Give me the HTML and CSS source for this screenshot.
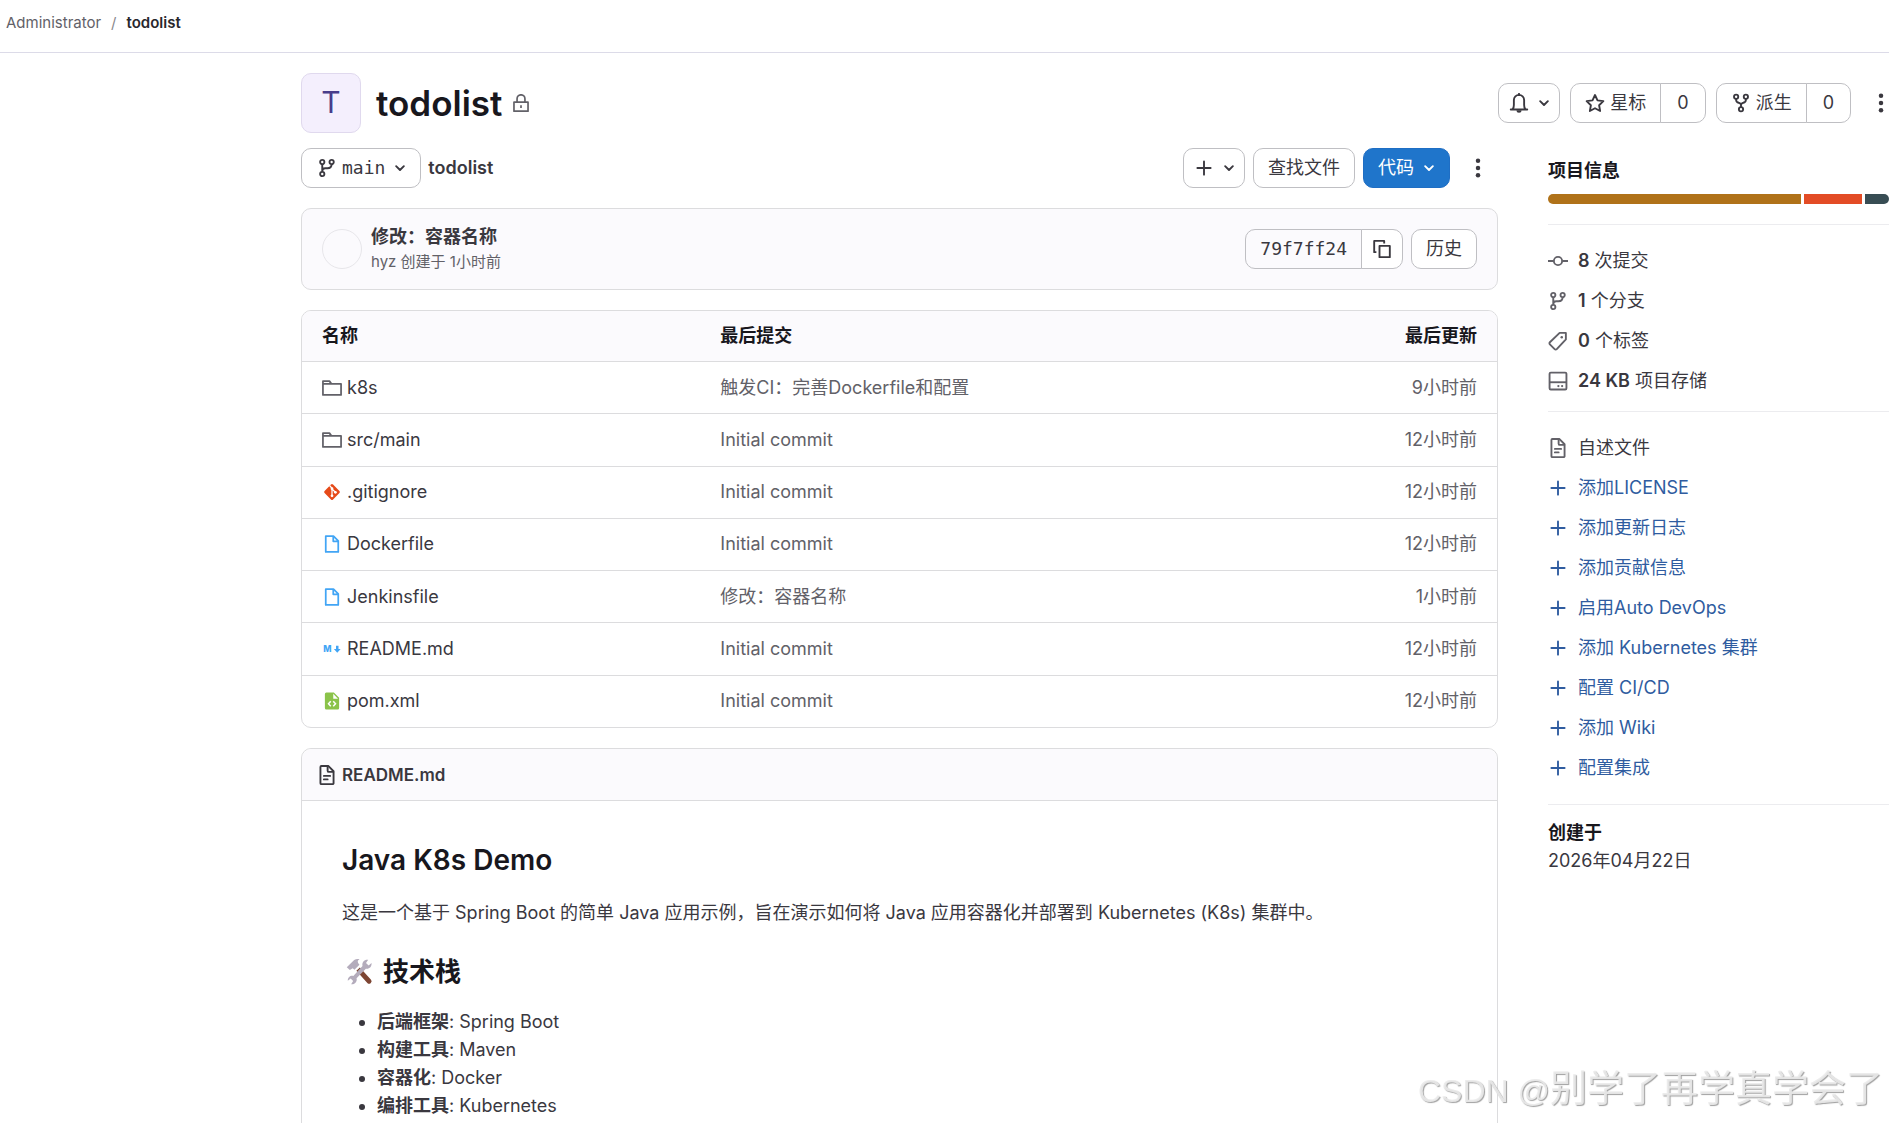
FILE: index.html
```html
<!DOCTYPE html>
<html lang="zh-CN">
<head>
    <meta charset="UTF-8">
    <meta name="viewport" content="width=device-width, initial-scale=1.0">
    <title>Administrator / todolist</title>
    <link rel="stylesheet" href="styles.css">
</head>
<body>

<!-- Shared icons -->
<svg class="sprite" aria-hidden="true">
    <symbol id="chevron" viewBox="0 0 16 16"><path d="M4.9 6.5 8 9.6l3.1-3.1" fill="none" stroke="currentColor" stroke-width="1.5" stroke-linecap="round" stroke-linejoin="round"/></symbol>
    <symbol id="plus" viewBox="0 0 16 16"><path d="M8 2.7v10.6M2.7 8h10.6" fill="none" stroke="currentColor" stroke-width="1.5" stroke-linecap="round"/></symbol>
    <symbol id="kebab" viewBox="0 0 16 16"><g fill="currentColor"><circle cx="8" cy="2.2" r="1.8"/><circle cx="8" cy="8" r="1.8"/><circle cx="8" cy="13.8" r="1.8"/></g></symbol>
    <symbol id="branch" viewBox="0 0 16 16"><g fill="none" stroke="currentColor" stroke-width="1.5"><circle cx="4.2" cy="3.2" r="1.7"/><circle cx="11.7" cy="3.2" r="1.7"/><circle cx="4.2" cy="12.8" r="1.7"/><path d="M4.2 5v6M11.7 5c0 2.4-1.2 3.2-3.4 3.2H6.6C5 8.2 4.2 9 4.2 10.5"/></g></symbol>
    <symbol id="fork" viewBox="0 0 16 16"><g fill="none" stroke="currentColor" stroke-width="1.5"><circle cx="4.1" cy="3" r="1.7"/><circle cx="11.9" cy="3" r="1.7"/><circle cx="8" cy="13" r="1.7"/><path d="M4.1 4.7v.8C4.1 7 5.2 7.5 6.2 7.8 7.3 8.1 8 8.5 8 9.5v1.7M11.9 4.7v.8c0 1.5-1.1 2-2.1 2.3C8.7 8.1 8 8.5 8 9.5"/></g></symbol>
    <symbol id="doc" viewBox="0 0 16 16"><g fill="none" stroke="currentColor" stroke-width="1.5" stroke-linejoin="round"><path d="M2.75 1.5a.75.75 0 0 1 .75-.75H9L13.25 5v9.5a.75.75 0 0 1-.75.75h-9a.75.75 0 0 1-.75-.75z"/><path d="M8.5 1v3.5a1 1 0 0 0 1 1H13M5.5 8.7h5M5.5 11.5h3" stroke-linecap="round"/></g></symbol>
    <symbol id="folder" viewBox="0 0 16 16"><path d="M.75 13.5v-11h5.2l1.6 2.2h7.7v8.8zM.75 4.7h7" fill="none" stroke="currentColor" stroke-width="1.4" stroke-linejoin="round"/></symbol>
    <symbol id="file" viewBox="0 0 16 16"><path d="M3 1.7h6.2L13 5.5v8.800H3zM9 1.9v3.9h3.9" fill="none" stroke="#42a5f5" stroke-width="1.4" stroke-linejoin="round"/></symbol>
</svg>

<header class="topbar">
    <nav class="crumbs" aria-label="Breadcrumb">
        <a href="#">Administrator</a>
        <span class="slash">/</span>
        <a href="#" class="current">todolist</a>
    </nav>
</header>

<div class="page">
    <div class="project-header">
        <div class="avatar">T</div>
        <h1>todolist</h1>
        <svg class="lock" viewBox="0 0 16 16"><path d="M1.75 7.25h12.5v8H1.75zM4.5 7V4.2a3.5 3.5 0 0 1 7 0V7M8 10v2.5" fill="none" stroke="currentColor" stroke-width="1.5" stroke-linejoin="round"/></svg>
        <div class="actions">
            <button class="btn icon-drop" aria-label="通知"><svg class="icon" viewBox="0 0 16 16"><path d="M1.4 13.2h13.2M2.900 13c.7-1 1-2 1-3.500V5.600a4.100 4.100 0 0 1 8.200 0v3.900c0 1.500.3 2.500 1 3.500M8 .6v1" fill="none" stroke="currentColor" stroke-width="1.5" stroke-linecap="round"/><path d="M6 13.8h4a2 2 0 0 1-4 0z" fill="currentColor"/></svg><svg class="icon"><use href="#chevron"/></svg></button>
            <div class="btn-group">
                <button class="btn"><svg class="icon" viewBox="0 0 16 16"><path d="m8 1.6 2 4.300 4.700.6-3.400 3.300.8 4.600L8 12.200l-4.100 2.200.8-4.600-3.400-3.300 4.700-.6z" fill="none" stroke="currentColor" stroke-width="1.5" stroke-linejoin="round"/></svg>星标</button>
                <button class="btn count">0</button>
            </div>
            <div class="btn-group">
                <button class="btn"><svg class="icon"><use href="#fork"/></svg>派生</button>
                <button class="btn count">0</button>
            </div>
            <button class="btn-kebab" aria-label="更多"><svg class="icon"><use href="#kebab"/></svg></button>
        </div>
    </div>

    <div class="columns">
        <main>
            <div class="toolbar">
                <button class="btn branch"><svg class="icon"><use href="#branch"/></svg>main<svg class="icon"><use href="#chevron"/></svg></button>
                <a href="#" class="path">todolist</a>
                <div class="tools">
                    <button class="btn icon-drop" aria-label="添加"><svg class="icon"><use href="#plus"/></svg><svg class="icon"><use href="#chevron"/></svg></button>
                    <button class="btn">查找文件</button>
                    <button class="btn primary">代码<svg class="icon"><use href="#chevron"/></svg></button>
                    <button class="btn-kebab" aria-label="更多"><svg class="icon"><use href="#kebab"/></svg></button>
                </div>
            </div>

            <section class="commit">
                <div class="user-avatar"></div>
                <div class="commit-text">
                    <a href="#" class="commit-title">修改：容器名称</a>
                    <div class="commit-meta">hyz 创建于 1小时前</div>
                </div>
                <div class="btn-group">
                    <button class="btn sha">79f7ff24</button>
                    <button class="btn copy" aria-label="复制"><svg class="icon" viewBox="0 0 16 16"><path d="M3.5 10.5H1.75v-9h8v2M6 5.5h8.25v9H6z" fill="none" stroke="currentColor" stroke-width="1.5" stroke-linejoin="round"/></svg></button>
                </div>
                <button class="btn">历史</button>
            </section>

            <div class="files">
                <table>
                    <thead>
                        <tr><th>名称</th><th>最后提交</th><th>最后更新</th></tr>
                    </thead>
                    <tbody>
                        <tr>
                            <td><a href="#"><svg class="icon folder"><use href="#folder"/></svg>k8s</a></td>
                            <td>触发CI：完善Dockerfile和配置</td>
                            <td>9小时前</td>
                        </tr>
                        <tr>
                            <td><a href="#"><svg class="icon folder"><use href="#folder"/></svg>src/main</a></td>
                            <td>Initial commit</td>
                            <td>12小时前</td>
                        </tr>
                        <tr>
                            <td><a href="#"><svg class="icon" viewBox="0 0 16 16"><rect x="3.2" y="3.2" width="9.6" height="9.6" rx="1.2" transform="rotate(45 8 8)" fill="#e64a19"/><path d="M6 2.800 8 5v6.200M8 5.500l2.500 2.500" fill="none" stroke="#fff" stroke-width="1"/><g fill="#fff"><circle cx="8" cy="5.3" r="1.1"/><circle cx="8" cy="11" r="1.1"/><circle cx="10.7" cy="8.2" r="1.1"/></g></svg>.gitignore</a></td>
                            <td>Initial commit</td>
                            <td>12小时前</td>
                        </tr>
                        <tr>
                            <td><a href="#"><svg class="icon"><use href="#file"/></svg>Dockerfile</a></td>
                            <td>Initial commit</td>
                            <td>12小时前</td>
                        </tr>
                        <tr>
                            <td><a href="#"><svg class="icon"><use href="#file"/></svg>Jenkinsfile</a></td>
                            <td>修改：容器名称</td>
                            <td>1小时前</td>
                        </tr>
                        <tr>
                            <td><a href="#"><svg class="icon" viewBox="0 0 16 16"><text x="1" y="10.5" class="md-mark">M</text><path d="M11.200 5.300h2v2.600h1.700L12.200 11 9.500 7.900h1.700z" fill="#42a5f5"/></svg>README.md</a></td>
                            <td>Initial commit</td>
                            <td>12小时前</td>
                        </tr>
                        <tr>
                            <td><a href="#"><svg class="icon" viewBox="0 0 16 16"><path d="M3.5 1.2h6l4.2 4.2v8.2a1.2 1.2 0 0 1-1.2 1.2h-9a1.2 1.2 0 0 1-1.2-1.2V2.4a1.2 1.2 0 0 1 1.2-1.2z" fill="#8bc34a"/><path d="M9 2.2v3.9h3.8z" fill="#fff"/><path d="m7 8.2-1.8 2 1.8 2M9 8.2l1.8 2-1.8 2" fill="none" stroke="#fff" stroke-width="1.2"/></svg>pom.xml</a></td>
                            <td>Initial commit</td>
                            <td>12小时前</td>
                        </tr>
                    </tbody>
                </table>
            </div>

            <article class="readme">
                <div class="readme-header"><svg class="icon"><use href="#doc"/></svg><a href="#">README.md</a></div>
                <div class="readme-body">
                    <h2>Java K8s Demo</h2>
                    <p>这是一个基于 Spring Boot 的简单 Java 应用示例，旨在演示如何将 Java 应用容器化并部署到 Kubernetes (K8s) 集群中。</p>
                    <h3>
                        <svg class="tools-icon" viewBox="0 0 32 32"><path d="M13 14.5 17 10.8l12.5 13.700a2.8 2.8 0 0 1-4 4z" fill="#7d4533"/><path d="M2 10.5 10.5 2.2c2-1.2 4-1.2 6.2-.8-2 .9-2.6 2.3-1.7 4.3l1.5 2.1-5.7 5.7-2-1.8-3.3 2z" fill="#b4acbc"/><path d="M26.5 2c-4-.7-7.5 2.5-6.5 7L9.5 20.5C6.5 19.5 3 22 3.2 26l3.3-2.5 2.8 2.8L7 30c4.3.3 7.3-3.2 6.2-7L23.8 12.3c4 .6 7-2.3 6.5-6.5L27 8.5 24 5.7z" fill="#b4acbc"/></svg>
                        技术栈
                    </h3>
                    <ul>
                        <li><strong>后端框架</strong>: Spring Boot</li>
                        <li><strong>构建工具</strong>: Maven</li>
                        <li><strong>容器化</strong>: Docker</li>
                        <li><strong>编排工具</strong>: Kubernetes</li>
                    </ul>
                </div>
            </article>
        </main>

        <aside>
            <h4>项目信息</h4>
            <div class="languages">
                <span class="java"></span>
                <span class="html"></span>
                <span class="docker"></span>
            </div>

            <ul class="stats">
                <li><svg class="icon" viewBox="0 0 16 16"><path d="M0 8h4.5M11.5 8H16" stroke="currentColor" stroke-width="1.5"/><circle cx="8" cy="8" r="3.3" fill="none" stroke="currentColor" stroke-width="1.5"/></svg><a href="#"><strong>8</strong> 次提交</a></li>
                <li><svg class="icon"><use href="#branch"/></svg><a href="#"><strong>1</strong> 个分支</a></li>
                <li><svg class="icon" viewBox="0 0 16 16"><path d="M9.3 1.5h5v5.2L7 14.5a1.2 1.2 0 0 1-1.7 0L1.5 10.7a1.2 1.2 0 0 1 0-1.7z" fill="none" stroke="currentColor" stroke-width="1.5" stroke-linejoin="round"/><circle cx="11" cy="4.9" r="1" fill="currentColor"/></svg><a href="#"><strong>0</strong> 个标签</a></li>
                <li><svg class="icon" viewBox="0 0 16 16"><rect x="1.25" y="1.25" width="13.5" height="13.5" rx="1" fill="none" stroke="currentColor" stroke-width="1.5"/><path d="M1.25 9h13.5" stroke="currentColor" stroke-width="1.5"/><circle cx="8.3" cy="12" r=".9" fill="currentColor"/><circle cx="11.3" cy="12" r=".9" fill="currentColor"/></svg><a href="#"><strong>24 KB</strong> 项目存储</a></li>
            </ul>

            <ul class="setup">
                <li><svg class="icon"><use href="#doc"/></svg><a href="#">自述文件</a></li>
                <li class="add"><svg class="icon"><use href="#plus"/></svg><a href="#">添加LICENSE</a></li>
                <li class="add"><svg class="icon"><use href="#plus"/></svg><a href="#">添加更新日志</a></li>
                <li class="add"><svg class="icon"><use href="#plus"/></svg><a href="#">添加贡献信息</a></li>
                <li class="add"><svg class="icon"><use href="#plus"/></svg><a href="#">启用Auto DevOps</a></li>
                <li class="add"><svg class="icon"><use href="#plus"/></svg><a href="#">添加 Kubernetes 集群</a></li>
                <li class="add"><svg class="icon"><use href="#plus"/></svg><a href="#">配置 CI/CD</a></li>
                <li class="add"><svg class="icon"><use href="#plus"/></svg><a href="#">添加 Wiki</a></li>
                <li class="add"><svg class="icon"><use href="#plus"/></svg><a href="#">配置集成</a></li>
            </ul>

            <div class="created">
                <h4>创建于</h4>
                <div>2026年04月22日</div>
            </div>
        </aside>
    </div>
</div>

<div class="watermark"><span>CSDN @</span>别学了再学真学会了</div>

</body>
</html>
```
FILE: styles.css
```css
* {
    box-sizing: border-box;
}

body {
    margin: 0;
    height: 100vh;
    overflow: hidden;
    font-family: Inter, "Noto Sans CJK SC", sans-serif;
    font-size: 18px;
    line-height: 28px;
    color: #3a383f;
    background-color: #fff;
}

a {
    color: inherit;
    text-decoration: none;
}

h1, h2, h3, h4, p, ul {
    margin: 0;
    padding: 0;
}

h1, h2, h3, h4 {
    color: #18171d;
    font-weight: 600;
}

strong {
    font-weight: 600;
}

.sprite {
    display: none;
}

.icon {
    width: 20px;
    height: 20px;
    flex: none;
}

/* Top bar */
.topbar {
    height: 53px;
    padding: 9px 6px;
    border-bottom: 1px solid #dcdbe8;
}

.crumbs {
    display: flex;
    gap: 10px;
    font-size: 15px;
    color: #626168;
}

.crumbs .slash {
    color: #89888d;
}

.crumbs .current {
    color: #28272d;
    font-weight: 600;
}

/* Project header */
.page {
    padding-left: 301px;
}

.project-header {
    display: flex;
    align-items: center;
    padding-top: 20px;
}

.avatar {
    width: 60px;
    height: 60px;
    border: 1px solid #e0d9ee;
    border-radius: 10px;
    background-color: #f4effd;
    color: #483d8b;
    font-size: 30px;
    line-height: 56px;
    text-align: center;
}

h1 {
    margin-left: 15px;
    font-size: 35px;
    line-height: 44px;
}

.lock {
    width: 18px;
    height: 18px;
    margin-left: 10px;
    color: #626168;
}

.actions {
    display: flex;
    gap: 10px;
    margin-left: auto;
    margin-right: -12px;
}

/* Buttons */
.btn {
    display: flex;
    align-items: center;
    gap: 5px;
    height: 40px;
    padding: 0 14px;
    border: 1px solid #bfbfc3;
    border-radius: 10px;
    background-color: #fff;
    color: #3a383f;
    font: inherit;
    cursor: pointer;
}

.icon-drop {
    padding: 0 5px 0 10px;
}

.btn-group {
    display: flex;
}

.btn-group .btn:first-child {
    border-radius: 10px 0 0 10px;
}

.btn-group .btn:last-child {
    margin-left: -1px;
    border-radius: 0 10px 10px 0;
}

.count {
    padding: 0 16px;
}

.branch {
    padding: 0 10px 0 15px;
    font-family: "DejaVu Sans Mono", monospace;
}

.primary {
    padding-right: 10px;
    border-color: #1f6ec4;
    background-color: #1f75cb;
    color: #fff;
}

.btn-kebab {
    display: flex;
    align-items: center;
    justify-content: center;
    width: 40px;
    height: 40px;
    padding: 0;
    border: 0;
    background: none;
    color: #3a383f;
    cursor: pointer;
}

/* Columns */
.columns {
    display: grid;
    grid-template-columns: minmax(0, 1fr) 341px;
    gap: 50px;
    margin-top: 15px;
}

.toolbar {
    display: flex;
    align-items: center;
    gap: 7px;
}

.path {
    font-weight: 600;
}

.tools {
    display: flex;
    gap: 8px;
    margin-left: auto;
}

/* Last commit */
.commit {
    display: flex;
    align-items: center;
    gap: 8px;
    height: 82px;
    margin-top: 20px;
    padding: 0 20px;
    border: 1px solid #dcdcde;
    border-radius: 10px;
    background-color: #fbfafd;
}

.user-avatar {
    width: 40px;
    height: 40px;
    border: 1px solid #e7e6ea;
    border-radius: 50%;
}

.commit-text {
    flex: 1;
    padding-left: 1px;
    line-height: 25px;
}

.commit-title {
    font-weight: 600;
}

.commit-meta {
    font-size: 15px;
    color: #626168;
}

.btn.sha {
    background-color: #fbfafd;
    font-family: "DejaVu Sans Mono", monospace;
}

.copy {
    padding: 0 10px;
}

/* File list */
.files {
    margin-top: 20px;
    border: 1px solid #dcdcde;
    border-radius: 10px;
    overflow: hidden;
}

table {
    width: 100%;
    height: 416px;
    table-layout: fixed;
    border-collapse: separate;
    border-spacing: 0;
}

th, td {
    height: 52px;
    padding: 0 20px;
    text-align: left;
}

th {
    height: 50px;
    background-color: #fbfafd;
    color: #18171d;
    font-weight: 600;
}

td {
    border-top: 1px solid #dcdcde;
    color: #626168;
}

td a {
    display: flex;
    align-items: center;
    gap: 5px;
    color: #3a383f;
}

th:last-child, td:last-child {
    text-align: right;
}

.folder {
    color: #626168;
}

.md-mark {
    font-size: 7px;
    font-weight: 800;
    fill: #42a5f5;
}

/* Readme */
.readme {
    margin-top: 20px;
    border: 1px solid #dcdcde;
    border-radius: 10px;
}

.readme-header {
    display: flex;
    align-items: center;
    gap: 5px;
    height: 52px;
    padding: 0 15px;
    border-bottom: 1px solid #dcdcde;
    border-radius: 10px 10px 0 0;
    background-color: #fbfafd;
    font-size: 17px;
    font-weight: 600;
}

.readme-body {
    padding: 40px 40px 80px;
}

h2 {
    font-size: 28px;
    line-height: 38px;
}

.readme-body p {
    margin-top: 20px;
}

h3 {
    display: flex;
    align-items: center;
    gap: 10px;
    margin-top: 28px;
    font-size: 26px;
    line-height: 34px;
}

.tools-icon {
    width: 28px;
    height: 28px;
    margin-left: 3px;
}

.readme-body ul {
    margin-top: 19px;
    padding-left: 35px;
}

/* Sidebar */
h4 {
    font-size: 18px;
    line-height: 28px;
}

aside > h4 {
    margin-top: 9px;
}

.languages {
    display: flex;
    gap: 3px;
    height: 10px;
    margin-top: 9px;
    border-radius: 5px;
    overflow: hidden;
}

.java {
    flex: 255;
    background-color: #b07219;
}

.html {
    flex: 58;
    background-color: #e34c26;
}

.docker {
    flex: 24;
    background-color: #384d54;
}

.stats, .setup {
    margin-top: 20px;
    padding: 16px 0 10px;
    border-top: 1px solid #ececef;
    list-style: none;
}

.stats {
    padding-bottom: 0;
}

.setup {
    margin-top: 10px;
}

aside li {
    display: flex;
    align-items: center;
    gap: 10px;
    height: 40px;
}

aside li .icon {
    color: #626168;
}

.add a, aside .add .icon {
    color: #2f5ca0;
}

.created {
    margin-top: 6px;
    padding-top: 14px;
    border-top: 1px solid #ececef;
}

/* Watermark over the page corner */
.watermark {
    position: fixed;
    right: 6px;
    bottom: 8px;
    color: rgba(235, 235, 235, 0.9);
    font-family: "Liberation Sans", "Noto Sans CJK SC", sans-serif;
    font-size: 37px;
    line-height: 48px;
    text-shadow: 1px 1px 1px #a0a0a0;
}

.watermark span {
    font-size: 32px;
}
```
